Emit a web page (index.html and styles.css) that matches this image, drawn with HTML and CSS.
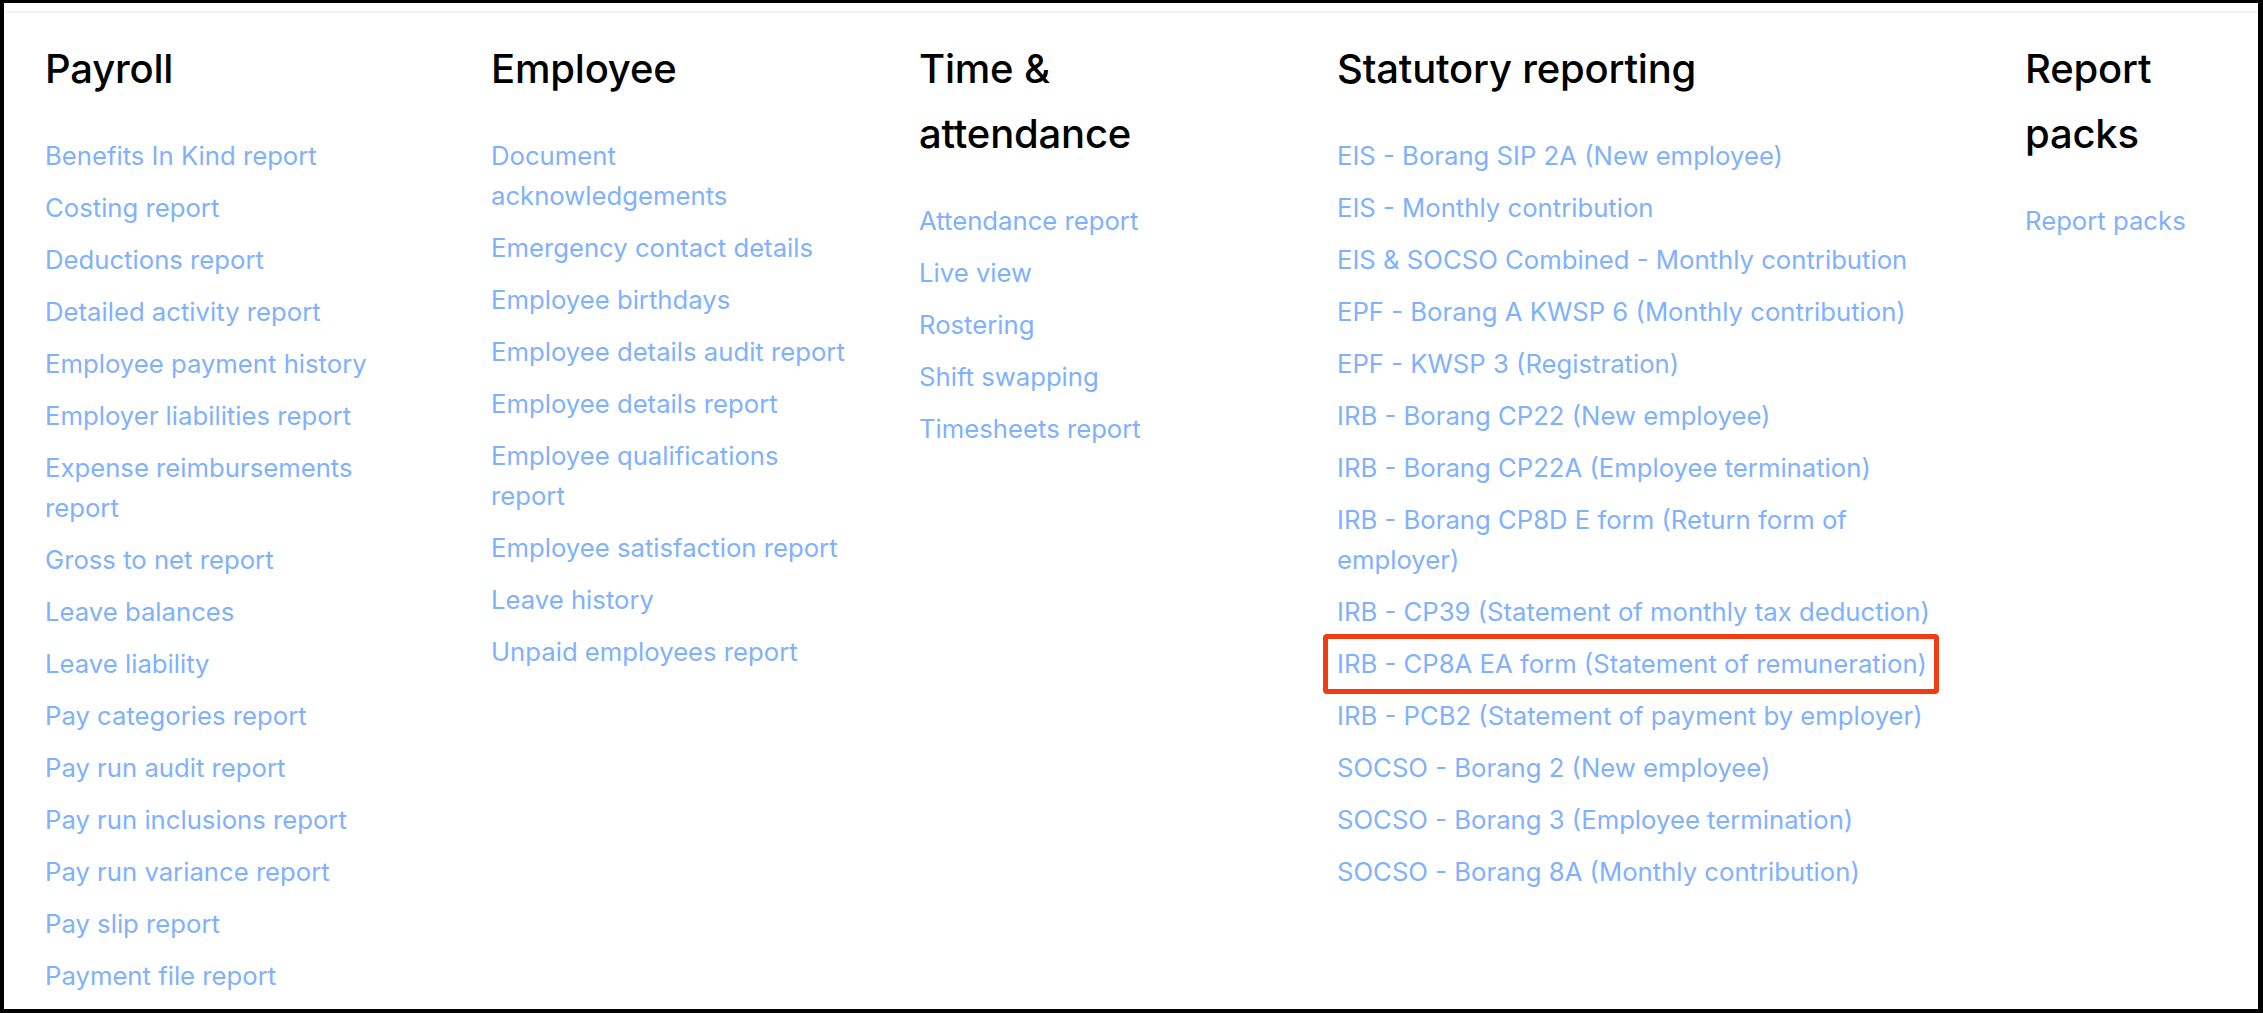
FILE: index.html
```html
<!DOCTYPE html>
<html lang="en">
<head>
  <meta charset="UTF-8">
  <title>Reports</title>
  <link rel="stylesheet" href="styles.css">
</head>
<body>
<div class="frame">
  <div class="panel">
    <div class="report-columns">

      <section class="col col-payroll">
        <h2>Payroll</h2>
        <ul class="report-list">
          <li><a href="#">Benefits In Kind report</a></li>
          <li><a href="#">Costing report</a></li>
          <li><a href="#">Deductions report</a></li>
          <li><a href="#">Detailed activity report</a></li>
          <li><a href="#">Employee payment history</a></li>
          <li><a href="#">Employer liabilities report</a></li>
          <li><a href="#">Expense reimbursements report</a></li>
          <li><a href="#">Gross to net report</a></li>
          <li><a href="#">Leave balances</a></li>
          <li><a href="#">Leave liability</a></li>
          <li><a href="#">Pay categories report</a></li>
          <li><a href="#">Pay run audit report</a></li>
          <li><a href="#">Pay run inclusions report</a></li>
          <li><a href="#">Pay run variance report</a></li>
          <li><a href="#">Pay slip report</a></li>
          <li><a href="#">Payment file report</a></li>
        </ul>
      </section>

      <section class="col col-employee">
        <h2>Employee</h2>
        <ul class="report-list">
          <li><a href="#">Document acknowledgements</a></li>
          <li><a href="#">Emergency contact details</a></li>
          <li><a href="#">Employee birthdays</a></li>
          <li><a href="#">Employee details audit report</a></li>
          <li><a href="#">Employee details report</a></li>
          <li><a href="#">Employee qualifications report</a></li>
          <li><a href="#">Employee satisfaction report</a></li>
          <li><a href="#">Leave history</a></li>
          <li><a href="#">Unpaid employees report</a></li>
        </ul>
      </section>

      <section class="col col-time">
        <h2>Time &amp; attendance</h2>
        <ul class="report-list">
          <li><a href="#">Attendance report</a></li>
          <li><a href="#">Live view</a></li>
          <li><a href="#">Rostering</a></li>
          <li><a href="#">Shift swapping</a></li>
          <li><a href="#">Timesheets report</a></li>
        </ul>
      </section>

      <section class="col col-statutory">
        <h2>Statutory reporting</h2>
        <ul class="report-list">
          <li><a href="#">EIS - Borang SIP 2A (New employee)</a></li>
          <li><a href="#">EIS - Monthly contribution</a></li>
          <li><a href="#">EIS &amp; SOCSO Combined - Monthly contribution</a></li>
          <li><a href="#">EPF - Borang A KWSP 6 (Monthly contribution)</a></li>
          <li><a href="#">EPF - KWSP 3 (Registration)</a></li>
          <li><a href="#">IRB - Borang CP22 (New employee)</a></li>
          <li><a href="#">IRB - Borang CP22A (Employee termination)</a></li>
          <li><a href="#">IRB - Borang CP8D E form (Return form of employer)</a></li>
          <li><a href="#">IRB - CP39 (Statement of monthly tax deduction)</a></li>
          <li><a href="#" class="highlighted">IRB - CP8A EA form (Statement of remuneration)</a></li>
          <li><a href="#">IRB - PCB2 (Statement of payment by employer)</a></li>
          <li><a href="#">SOCSO - Borang 2 (New employee)</a></li>
          <li><a href="#">SOCSO - Borang 3 (Employee termination)</a></li>
          <li><a href="#">SOCSO - Borang 8A (Monthly contribution)</a></li>
        </ul>
      </section>

      <section class="col col-packs">
        <h2>Report packs</h2>
        <ul class="report-list">
          <li><a href="#">Report packs</a></li>
        </ul>
      </section>

    </div>
  </div>
</div>
</body>
</html>
```
FILE: styles.css
```css
html, body {
  margin: 0;
  height: 100%;
  background: #fff;
}

body {
  font-family: "Inter", "Liberation Sans", sans-serif;
}

.frame {
  box-sizing: border-box;
  height: 100vh;
  border: solid #000;
  border-width: 3px 5px 4px 4px;
  overflow: hidden;
}

.panel {
  margin: 8px 1px 0 1px;
  border-top: 2px solid #edf3f9;
  padding: 23px 0 0 40px;
}

.report-columns {
  display: grid;
  grid-template-columns: 446px 428px 418px 688px 1fr;
  align-items: start;
}

.col h2 {
  margin: 0 0 35px 0;
  font-size: 40px;
  font-weight: 500;
  line-height: 65px;
  color: #000;
  letter-spacing: -0.2px;
}

.col-payroll { max-width: 360px; }
.col-employee { max-width: 364px; }
.col-time { max-width: 330px; }
.col-statutory { max-width: 610px; }
.col-packs { max-width: 200px; }

.report-list {
  list-style: none;
  margin: 0;
  padding: 0;
}

.report-list li {
  font-size: 25.7px;
  line-height: 40px;
  margin-bottom: 12px;
}

.report-list a {
  color: #80b1fe;
  text-decoration: none;
}

.report-list a.highlighted {
  display: inline-block;
  position: relative;
}

.report-list a.highlighted:after {
  content: "";
  position: absolute;
  top: -10px;
  bottom: -10px;
  left: -14px;
  right: -12px;
  border: 5px solid #ee3d12;
  border-radius: 4px;
}
```
